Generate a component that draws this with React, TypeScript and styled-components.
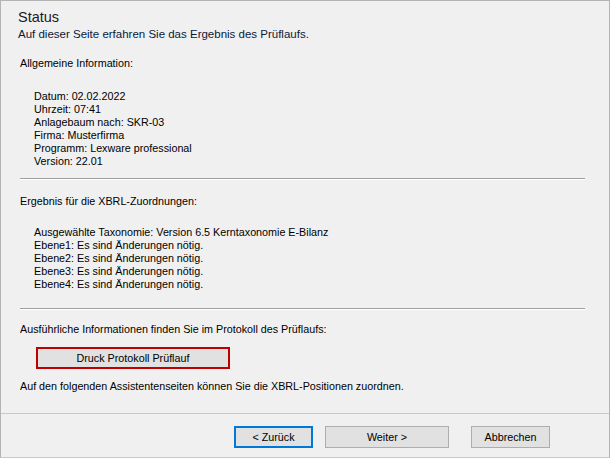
import React from 'react'
import styled, { createGlobalStyle } from 'styled-components'

const GlobalStyle = createGlobalStyle`
  html, body {
    margin: 0;
    padding: 0;
    background: #f0f0f0;
  }
  body {
    font-family: "Liberation Sans", Arial, sans-serif;
    font-size: 10.75px;
    color: #000000;
  }
`

const Window = styled.div`
  box-sizing: border-box;
  width: 610px;
  height: 458px;
  background: #f0f0f0;
  border: 1px solid #b4b4b4;
  border-bottom-color: #c8c8c8;
  display: flex;
  flex-direction: column;
`

const Header = styled.div`
  padding: 7px 0 0 17px;
`

const Title = styled.div`
  font-size: 14.5px;
  line-height: 18px;
  color: #1a1a1a;
`

const Subtitle = styled.div`
  margin-top: 1px;
  font-size: 11.5px;
  line-height: 14px;
  color: #0a1a3a;
`

const Body = styled.div`
  flex: 1;
  padding: 0 24px 0 19px;
  display: flex;
  flex-direction: column;
`

const Label = styled.div<{ top: number }>`
  margin-top: ${(p) => p.top}px;
  line-height: 13px;
`

const Block = styled.div<{ top: number }>`
  margin-top: ${(p) => p.top}px;
  padding-left: 14px;
  line-height: 13px;
`

const Separator = styled.div<{ top: number }>`
  margin-top: ${(p) => p.top}px;
  height: 1px;
  background: #a0a0a0;
  border-bottom: 1px solid #ffffff;
`

const PrintButton = styled.button`
  margin: 11px 0 0 16px;
  box-sizing: border-box;
  width: 194px;
  height: 22px;
  background: #e1e1e1;
  border: 2px solid #c00000;
  font-family: inherit;
  font-size: 10.75px;
  color: #000;
  padding: 0;
`

const Footer = styled.div`
  border-top: 1px solid #c2c9d6;
  height: 44px;
  display: flex;
  align-items: flex-start;
  padding: 12px 0 0 233px;
  box-sizing: border-box;
`

const WizButton = styled.button<{ width: number; gap: number; focused?: boolean }>`
  box-sizing: border-box;
  width: ${(p) => p.width}px;
  height: 22px;
  margin-left: ${(p) => p.gap}px;
  background: #e1e1e1;
  border: ${(p) => (p.focused ? '2px solid #0078d7' : '1px solid #adadad')};
  font-family: inherit;
  font-size: 10.75px;
  color: #000;
  padding: 0;
`

const general = [
  'Datum: 02.02.2022',
  'Uhrzeit: 07:41',
  'Anlagebaum nach: SKR-03',
  'Firma: Musterfirma',
  'Programm: Lexware professional',
  'Version: 22.01',
]

const result = [
  'Ausgewählte Taxonomie: Version 6.5 Kerntaxonomie E-Bilanz',
  'Ebene1: Es sind Änderungen nötig.',
  'Ebene2: Es sind Änderungen nötig.',
  'Ebene3: Es sind Änderungen nötig.',
  'Ebene4: Es sind Änderungen nötig.',
]

export default function App() {
  return (
    <>
      <GlobalStyle />
      <Window>
        <Header>
          <Title>Status</Title>
          <Subtitle>Auf dieser Seite erfahren Sie das Ergebnis des Prüflaufs.</Subtitle>
        </Header>
        <Body>
          <Label top={16}>Allgemeine Information:</Label>
          <Block top={20}>
            {general.map((line) => (
              <div key={line}>{line}</div>
            ))}
          </Block>
          <Separator top={10} />
          <Label top={15}>Ergebnis für die XBRL-Zuordnungen:</Label>
          <Block top={18}>
            {result.map((line) => (
              <div key={line}>{line}</div>
            ))}
          </Block>
          <Separator top={17} />
          <Label top={13}>Ausführliche Informationen finden Sie im Protokoll des Prüflaufs:</Label>
          <PrintButton>Druck Protokoll Prüflauf</PrintButton>
          <Label top={11}>Auf den folgenden Assistentenseiten können Sie die XBRL-Positionen zuordnen.</Label>
        </Body>
        <Footer>
          <WizButton width={79} gap={0} focused>
            &lt; Zurück
          </WizButton>
          <WizButton width={124} gap={12}>
            Weiter &gt;
          </WizButton>
          <WizButton width={79} gap={22}>
            Abbrechen
          </WizButton>
        </Footer>
      </Window>
    </>
  )
}
